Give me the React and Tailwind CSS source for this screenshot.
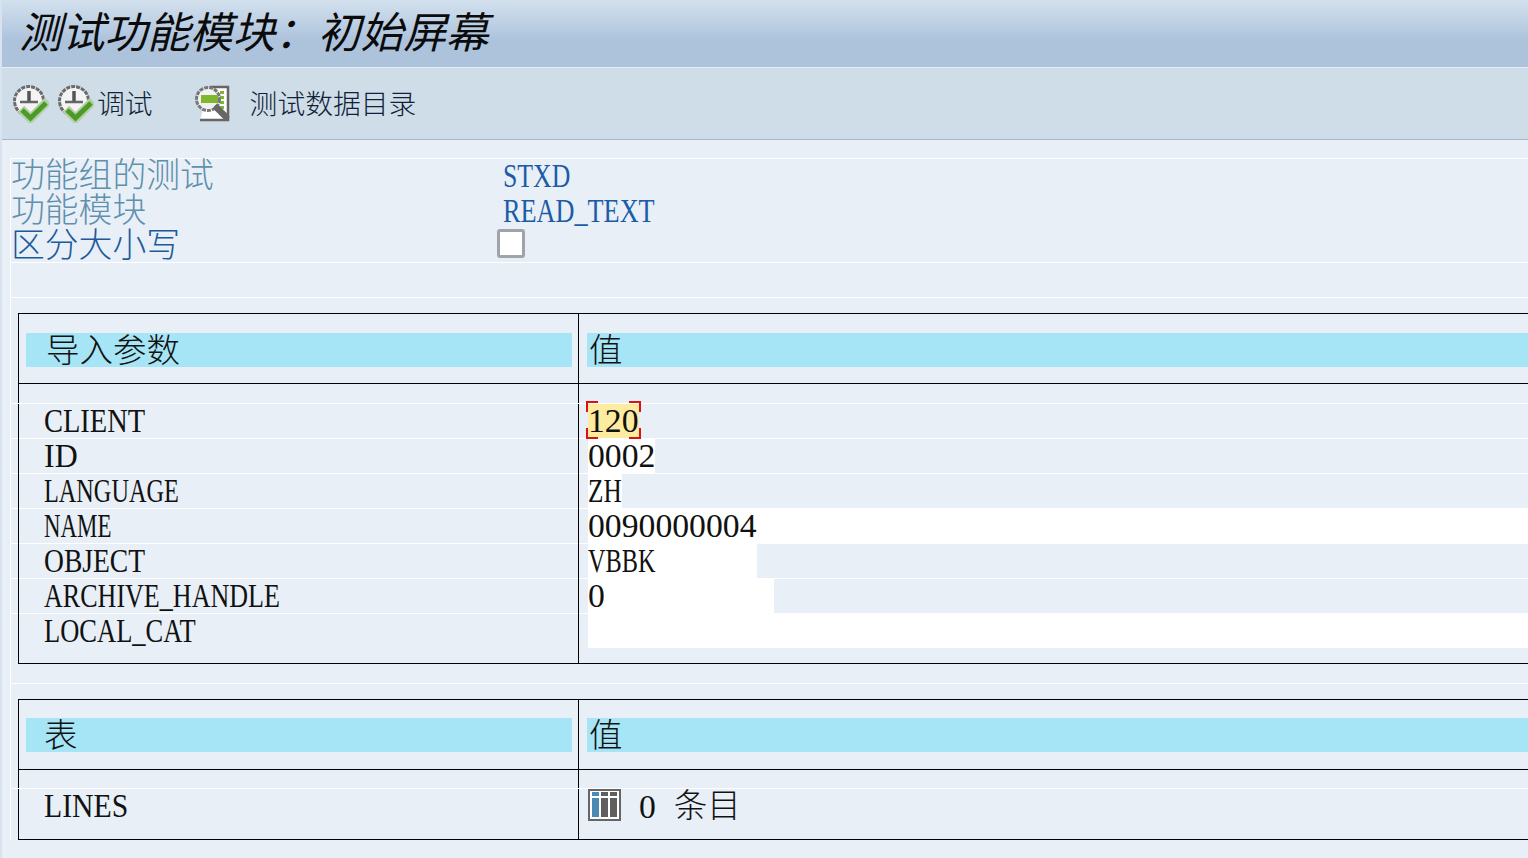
import { useLayoutEffect, useRef } from "react";

const cjk = '"Noto Sans CJK SC", "Liberation Sans", sans-serif';
const TITLE = "测试功能模块\uFF1A初始屏幕";

function Latin({ children, className = "" }) {
  const ref = useRef(null);
  const target = String(children).length * 16.85;
  useLayoutEffect(() => {
    const el = ref.current;
    const w = el.getBoundingClientRect().width;
    el.style.transform = `scaleX(${target / w})`;
  }, [target]);
  return (
    <span className={"inline-block h-[35px] overflow-visible align-top " + className} style={{ width: target }}>
      <span
        ref={ref}
        className="inline-block origin-left whitespace-pre text-[34px] leading-[34px]"
        style={{ fontFamily: '"Liberation Serif", serif', fontWeight: 400 }}
      >
        {children}
      </span>
    </span>
  );
}

function ClockCheck() {
  return (
    <svg width="36" height="38" viewBox="0 0 36 38">
      <circle cx="16" cy="16" r="14.5" fill="#f4f4f4" stroke="#6b6b6b" strokeWidth="3" strokeDasharray="4 1" />
      <path d="M16 6v12" fill="none" stroke="#555" strokeWidth="3.5" />
      <path d="M7 17h18" fill="none" stroke="#666" strokeWidth="2.5" />
      <path d="M8 24l9.5 9.5L35 16" fill="none" stroke="#b5cfa3" strokeWidth="9" />
      <path d="M9 25l8.5 8L33 18" fill="none" stroke="#4c9a2a" strokeWidth="5" />
    </svg>
  );
}

function FindIcon() {
  return (
    <svg width="36" height="38" viewBox="0 0 36 38">
      <path d="M5 35h28V2H15" fill="#fff" stroke="#666" strokeWidth="2.5" />
      <rect x="25" y="6" width="4" height="3" fill="#7fb82e" />
      <rect x="25" y="11" width="4" height="3" fill="#7fb82e" />
      <rect x="25" y="16" width="4" height="3" fill="#7fb82e" />
      <rect x="25" y="21" width="4" height="3" fill="#7fb82e" />
      <circle cx="13" cy="14" r="11.5" fill="#f2f2f2" stroke="#777" strokeWidth="3" strokeDasharray="4 1" />
      <rect x="6" y="10" width="17" height="8" fill="#7fb82e" />
      <path d="M22 23l9 9" stroke="#666" strokeWidth="6.5" strokeLinecap="round" />
    </svg>
  );
}

function TableIcon() {
  return (
    <svg width="33" height="32" viewBox="0 0 33 32" className="shrink-0">
      <rect x="0" y="0" width="33" height="32" fill="#666" />
      <rect x="2" y="2" width="29" height="28" fill="#fff" />
      <rect x="4" y="3" width="7" height="4" fill="#4a8ab5" />
      <rect x="13" y="3" width="7" height="4" fill="#5f5f5f" />
      <rect x="22" y="3" width="7" height="4" fill="#5f5f5f" />
      <rect x="4" y="9" width="7" height="19" fill="#4a8ab5" />
      <rect x="13" y="9" width="7" height="19" fill="#5f5f5f" />
      <rect x="22" y="9" width="7" height="19" fill="#5f5f5f" />
    </svg>
  );
}

function FormRow({ label, labelColor, value, children, className = "" }) {
  return (
    <div className={"flex items-center " + className}>
      <span className={"-mt-[8px] h-[35px] w-[492px] shrink-0 overflow-visible text-[33.8px] leading-[35px] " + labelColor}>{label}</span>
      {value ? <Latin className="text-[#1c5ca6]">{value}</Latin> : children}
    </div>
  );
}

function HeaderRow({ left, right, pad, bandClass = "" }) {
  return (
    <div className="grid h-[71px] grid-cols-[7px_561px_1fr]">
      <div />
      <div className="flex items-center border-x border-y border-black pl-[7px] pr-[6px]">
        <div className={"h-[34px] w-full bg-[#a5e5f5] text-[33.5px] leading-[30px] text-[#111] " + pad + " " + bandClass}>{left}</div>
      </div>
      <div className="flex items-center border-y border-black pl-[8px]">
        <div className={"h-[34px] w-full bg-[#a5e5f5] pl-[2px] text-[33.5px] leading-[30px] text-[#111] " + bandClass}>{right}</div>
      </div>
    </div>
  );
}

function DataRow({ label, children, height = "h-[35px]", last }) {
  return (
    <div className={"grid grid-cols-[7px_561px_1fr] border-t border-white " + height}>
      <div />
      <div className={"border-x border-black pl-[25px] " + (last ? "border-b" : "")}>
        <Latin className="text-[#111]">{label}</Latin>
      </div>
      <div className={"pl-[9px] " + (last ? "border-b border-black" : "")}>{children}</div>
    </div>
  );
}

function Corner({ className }) {
  return <span className={"absolute h-[11px] w-[12px] border-[#e01010] " + className} />;
}

export default function App() {
  return (
    <div
      className="h-[858px] w-[1528px] overflow-hidden border-l-2 border-[#d9e2ef] bg-[#e8eff7]"
      style={{ fontFamily: cjk, fontWeight: 300 }}
    >
      <div className="flex h-[67px] items-center bg-gradient-to-b from-[#d3e1ee] to-[#adc3dc] to-60% pl-[17px]">
        <span className="-mt-[10px] text-[42.7px] font-normal italic leading-[60px] text-[#0b0b0b]">{TITLE}</span>
      </div>
      <div className="flex h-[73px] items-center border-y border-t-[#e6edf5] border-b-[#a3b6c9] bg-[#cfdde9] pl-[11px] text-[27.8px] text-[#0f2338]">
        <ClockCheck />
        <span className="ml-[9px]"><ClockCheck /></span>
        <span className="-mt-[2px] ml-[3px]">调试</span>
        <span className="ml-[42px]"><FindIcon /></span>
        <span className="-mt-[2px] ml-[19px]">测试数据目录</span>
      </div>

      <div className="ml-[8px] border-l border-white">
        <div className="mt-[18px] flex h-[105px] flex-col border-y border-white">
          <FormRow label="功能组的测试" labelColor="text-[#5f90ad]" value="STXD" className="h-[35px]" />
          <FormRow label="功能模块" labelColor="text-[#5f90ad]" value="READ_TEXT" className="h-[35px]" />
          <FormRow label="区分大小写" labelColor="text-[#1d5a9c]" className="h-[33px] pt-[2px]">
            <span className="-ml-[6px] -mt-[6px] h-[29px] w-[28px] shrink-0 rounded-[3px] border-[3px] border-[#a0a4a8] bg-white" />
          </FormRow>
        </div>
        <div className="h-[35px] border-b border-white" />
        <div className="h-[15px]" />

        <HeaderRow left="导入参数" right="值" pad="pl-[20px]" bandClass="mt-[2px]" />
        <div className="grid h-[19px] grid-cols-[7px_561px_1fr]"><div /><div className="border-x border-black" /></div>
        <DataRow label="CLIENT">
          <span className="relative inline-block h-[34px] w-[51px] bg-[#fdeca0] align-top">
            <Latin className="text-[#111]">120</Latin>
            <Corner className="-left-[2px] -top-[3px] border-l-2 border-t-2" />
            <Corner className="-right-[2px] -top-[3px] border-r-2 border-t-2" />
            <Corner className="-bottom-[1px] -left-[2px] border-b-2 border-l-2" />
            <Corner className="-bottom-[1px] -right-[2px] border-b-2 border-r-2" />
          </span>
        </DataRow>
        <DataRow label="ID"><div className="inline-block h-[34px] bg-white align-top"><Latin className="text-[#111]">0002</Latin></div></DataRow>
        <DataRow label="LANGUAGE"><div className="inline-block h-[34px] bg-white align-top"><Latin className="text-[#111]">ZH</Latin></div></DataRow>
        <DataRow label="NAME"><div className="h-[35px] bg-white"><Latin className="text-[#111]">0090000004</Latin></div></DataRow>
        <DataRow label="OBJECT"><div className="h-[34px] w-[169px] bg-white"><Latin className="text-[#111]">VBBK</Latin></div></DataRow>
        <DataRow label="ARCHIVE_HANDLE"><div className="h-[34px] w-[186px] bg-white"><Latin className="text-[#111]">0</Latin></div></DataRow>
        <DataRow label="LOCAL_CAT" height="h-[51px]" last><div className="h-[34px] bg-white" /></DataRow>

        <div className="h-[20px] border-b border-white" />
        <div className="h-[15px]" />

        <HeaderRow left="表" right="值" pad="pl-[18px]" />
        <div className="grid h-[18px] grid-cols-[7px_561px_1fr]"><div /><div className="border-x border-black" /></div>
        <DataRow label="LINES" height="h-[52px]" last>
          <div className="flex h-[31px] items-center text-[33.5px] leading-[35px] text-[#111]">
            <TableIcon />
            <span className="-mt-[3px] ml-[18px] h-[35px]"><Latin>0</Latin></span>
            <span className="-mt-[4px] ml-[18px]">条目</span>
          </div>
        </DataRow>
      </div>
    </div>
  );
}
